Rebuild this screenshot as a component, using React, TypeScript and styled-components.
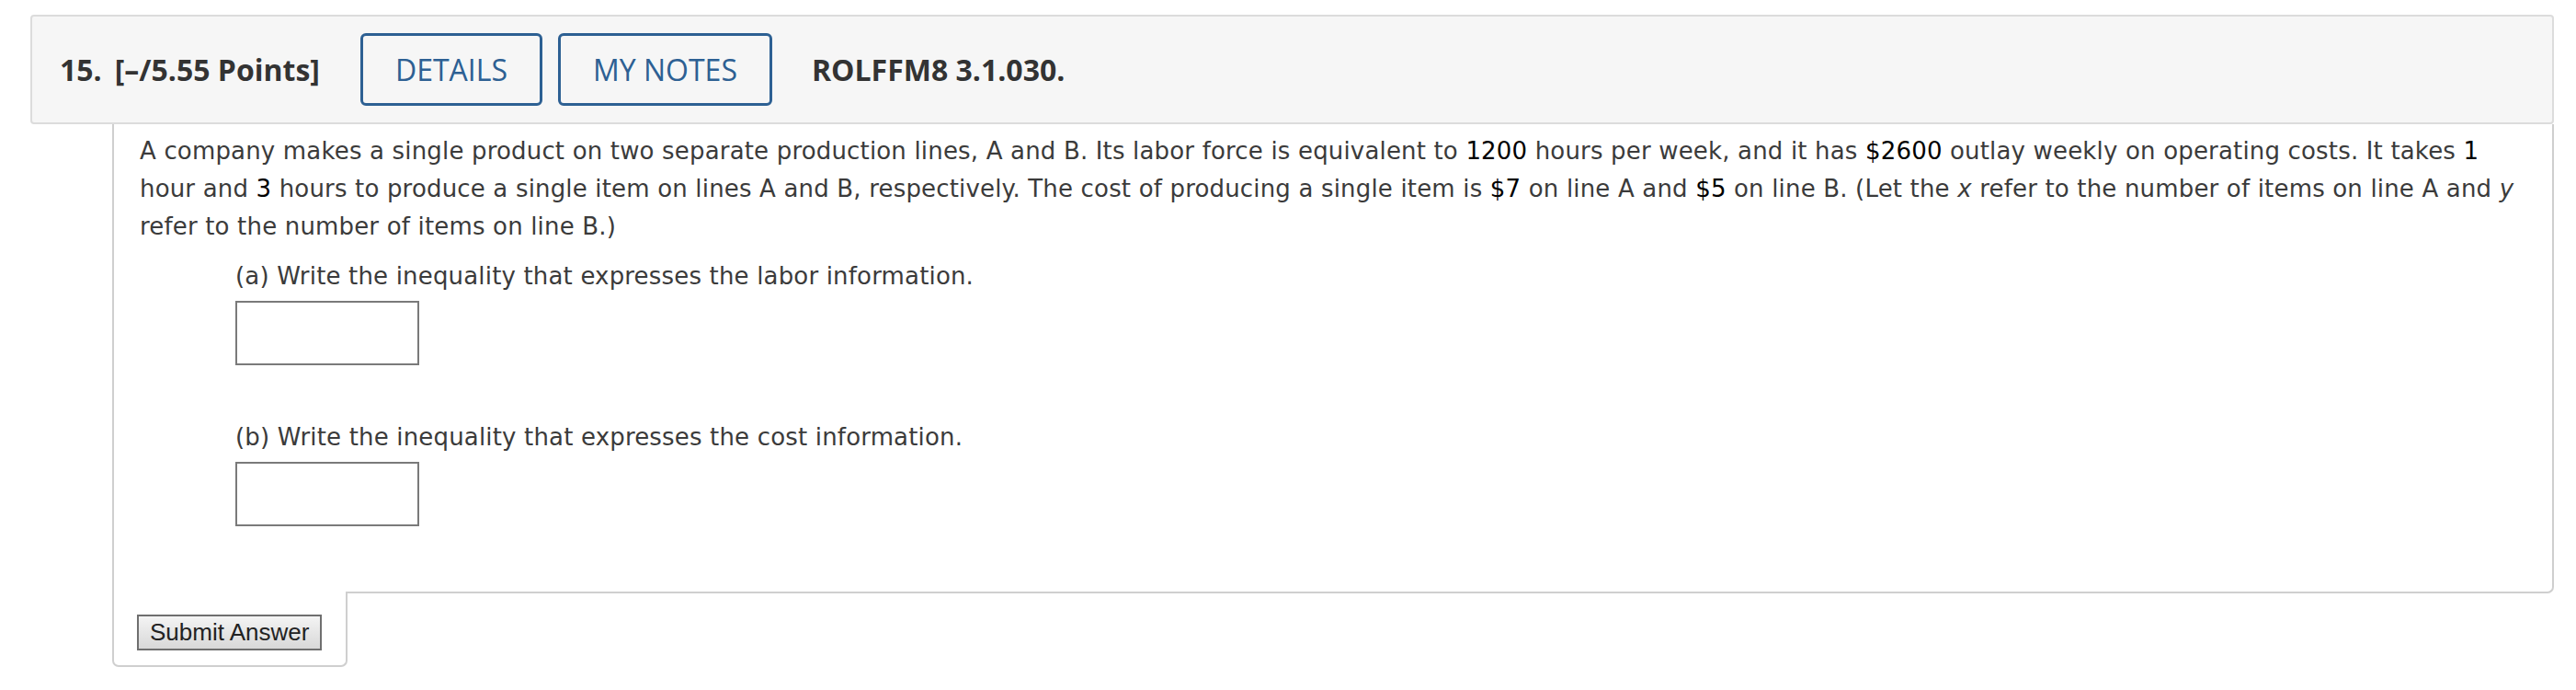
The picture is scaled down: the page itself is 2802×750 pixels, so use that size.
import styled, { createGlobalStyle } from 'styled-components';

const GlobalStyle = createGlobalStyle`
  body {
    margin: 0;
    background: #fff;
  }
`;

const Page = styled.div`
  padding: 16px 24px 0 33px;
`;

const Header = styled.div`
  height: 119px;
  box-sizing: border-box;
  display: flex;
  align-items: center;
  padding-left: 30px;
  background: #f6f6f6;
  border: 2px solid #dcdcdc;
  border-radius: 4px;
  font-family: 'Open Sans', 'Liberation Sans', sans-serif;
  font-size: 32px;
  font-weight: 700;
  color: #333;
`;

const Points = styled.span`
  margin-left: 14px;
`;

const Actions = styled.div`
  display: flex;
  gap: 17px;
  margin: 0 43px 0 44px;
`;

const OutlineButton = styled.button`
  height: 79px;
  box-sizing: border-box;
  padding: 0 35px;
  background: transparent;
  border: 3px solid #2d6093;
  border-radius: 6px;
  font-family: inherit;
  font-size: 32px;
  font-weight: 400;
  color: #2d6093;
  cursor: pointer;
`;

const Content = styled.div`
  margin-left: 89px;
`;

const QuestionBody = styled.div`
  padding: 9px 34px 71px 28px;
  background: #fff;
  border: 2px solid #cfcfcf;
  border-top: none;
  border-bottom-right-radius: 7px;
  font-family: 'DejaVu Sans', Verdana, sans-serif;
  font-size: 26px;
  letter-spacing: 0.17px;
  line-height: 41px;
  color: #3b3b3b;
`;

const Prompt = styled.p`
  margin: 0;
`;

const Num = styled.span`
  color: #000;
`;

const Part = styled.div<{ $gap: number }>`
  margin: ${(p) => p.$gap}px 0 0 104px;
`;

const AnswerBox = styled.input`
  display: block;
  width: 200px;
  height: 70px;
  box-sizing: border-box;
  margin-top: 6px;
  border: 2px solid #7a7a7a;
  background: #fff;
`;

const SubmitTab = styled.div`
  width: 256px;
  box-sizing: border-box;
  margin-top: -2px;
  padding: 25px 0 16px 25px;
  background: #fff;
  border: 2px solid #cfcfcf;
  border-top: none;
  border-radius: 0 0 7px 7px;
`;

const SubmitButton = styled.button`
  height: 39px;
  box-sizing: border-box;
  padding: 0 12px;
  background: linear-gradient(#f4f4f4, #d8d8d8);
  border: 2px solid #6f6f6f;
  border-radius: 0;
  font-family: 'Liberation Sans', Arial, sans-serif;
  font-size: 26px;
  line-height: 33px;
  color: #222;
`;

const App = () => {
  return (
    <Page>
      <GlobalStyle />
      <Header>
        <span>15.</span>
        <Points>[–/5.55 Points]</Points>
        <Actions>
          <OutlineButton>DETAILS</OutlineButton>
          <OutlineButton>MY NOTES</OutlineButton>
        </Actions>
        <span>ROLFFM8 3.1.030.</span>
      </Header>
      <Content>
        <QuestionBody>
          <Prompt>
            A company makes a single product on two separate production lines, A and B. Its labor force is
            equivalent to <Num>1200</Num> hours per week, and it has <Num>$2600</Num> outlay weekly on
            operating costs. It takes <Num>1</Num> hour and <Num>3</Num> hours to produce a single item on
            lines A and B, respectively. The cost of producing a single item is <Num>$7</Num> on line A and{' '}
            <Num>$5</Num> on line B. (Let the <i>x</i> refer to the number of items on line A and <i>y</i>{' '}
            refer to the number of items on line B.)
          </Prompt>
          <Part $gap={13}>
            <div>(a) Write the inequality that expresses the labor information.</div>
            <AnswerBox type="text" />
          </Part>
          <Part $gap={58}>
            <div>(b) Write the inequality that expresses the cost information.</div>
            <AnswerBox type="text" />
          </Part>
        </QuestionBody>
        <SubmitTab>
          <SubmitButton>Submit Answer</SubmitButton>
        </SubmitTab>
      </Content>
    </Page>
  );
};

export default App;
